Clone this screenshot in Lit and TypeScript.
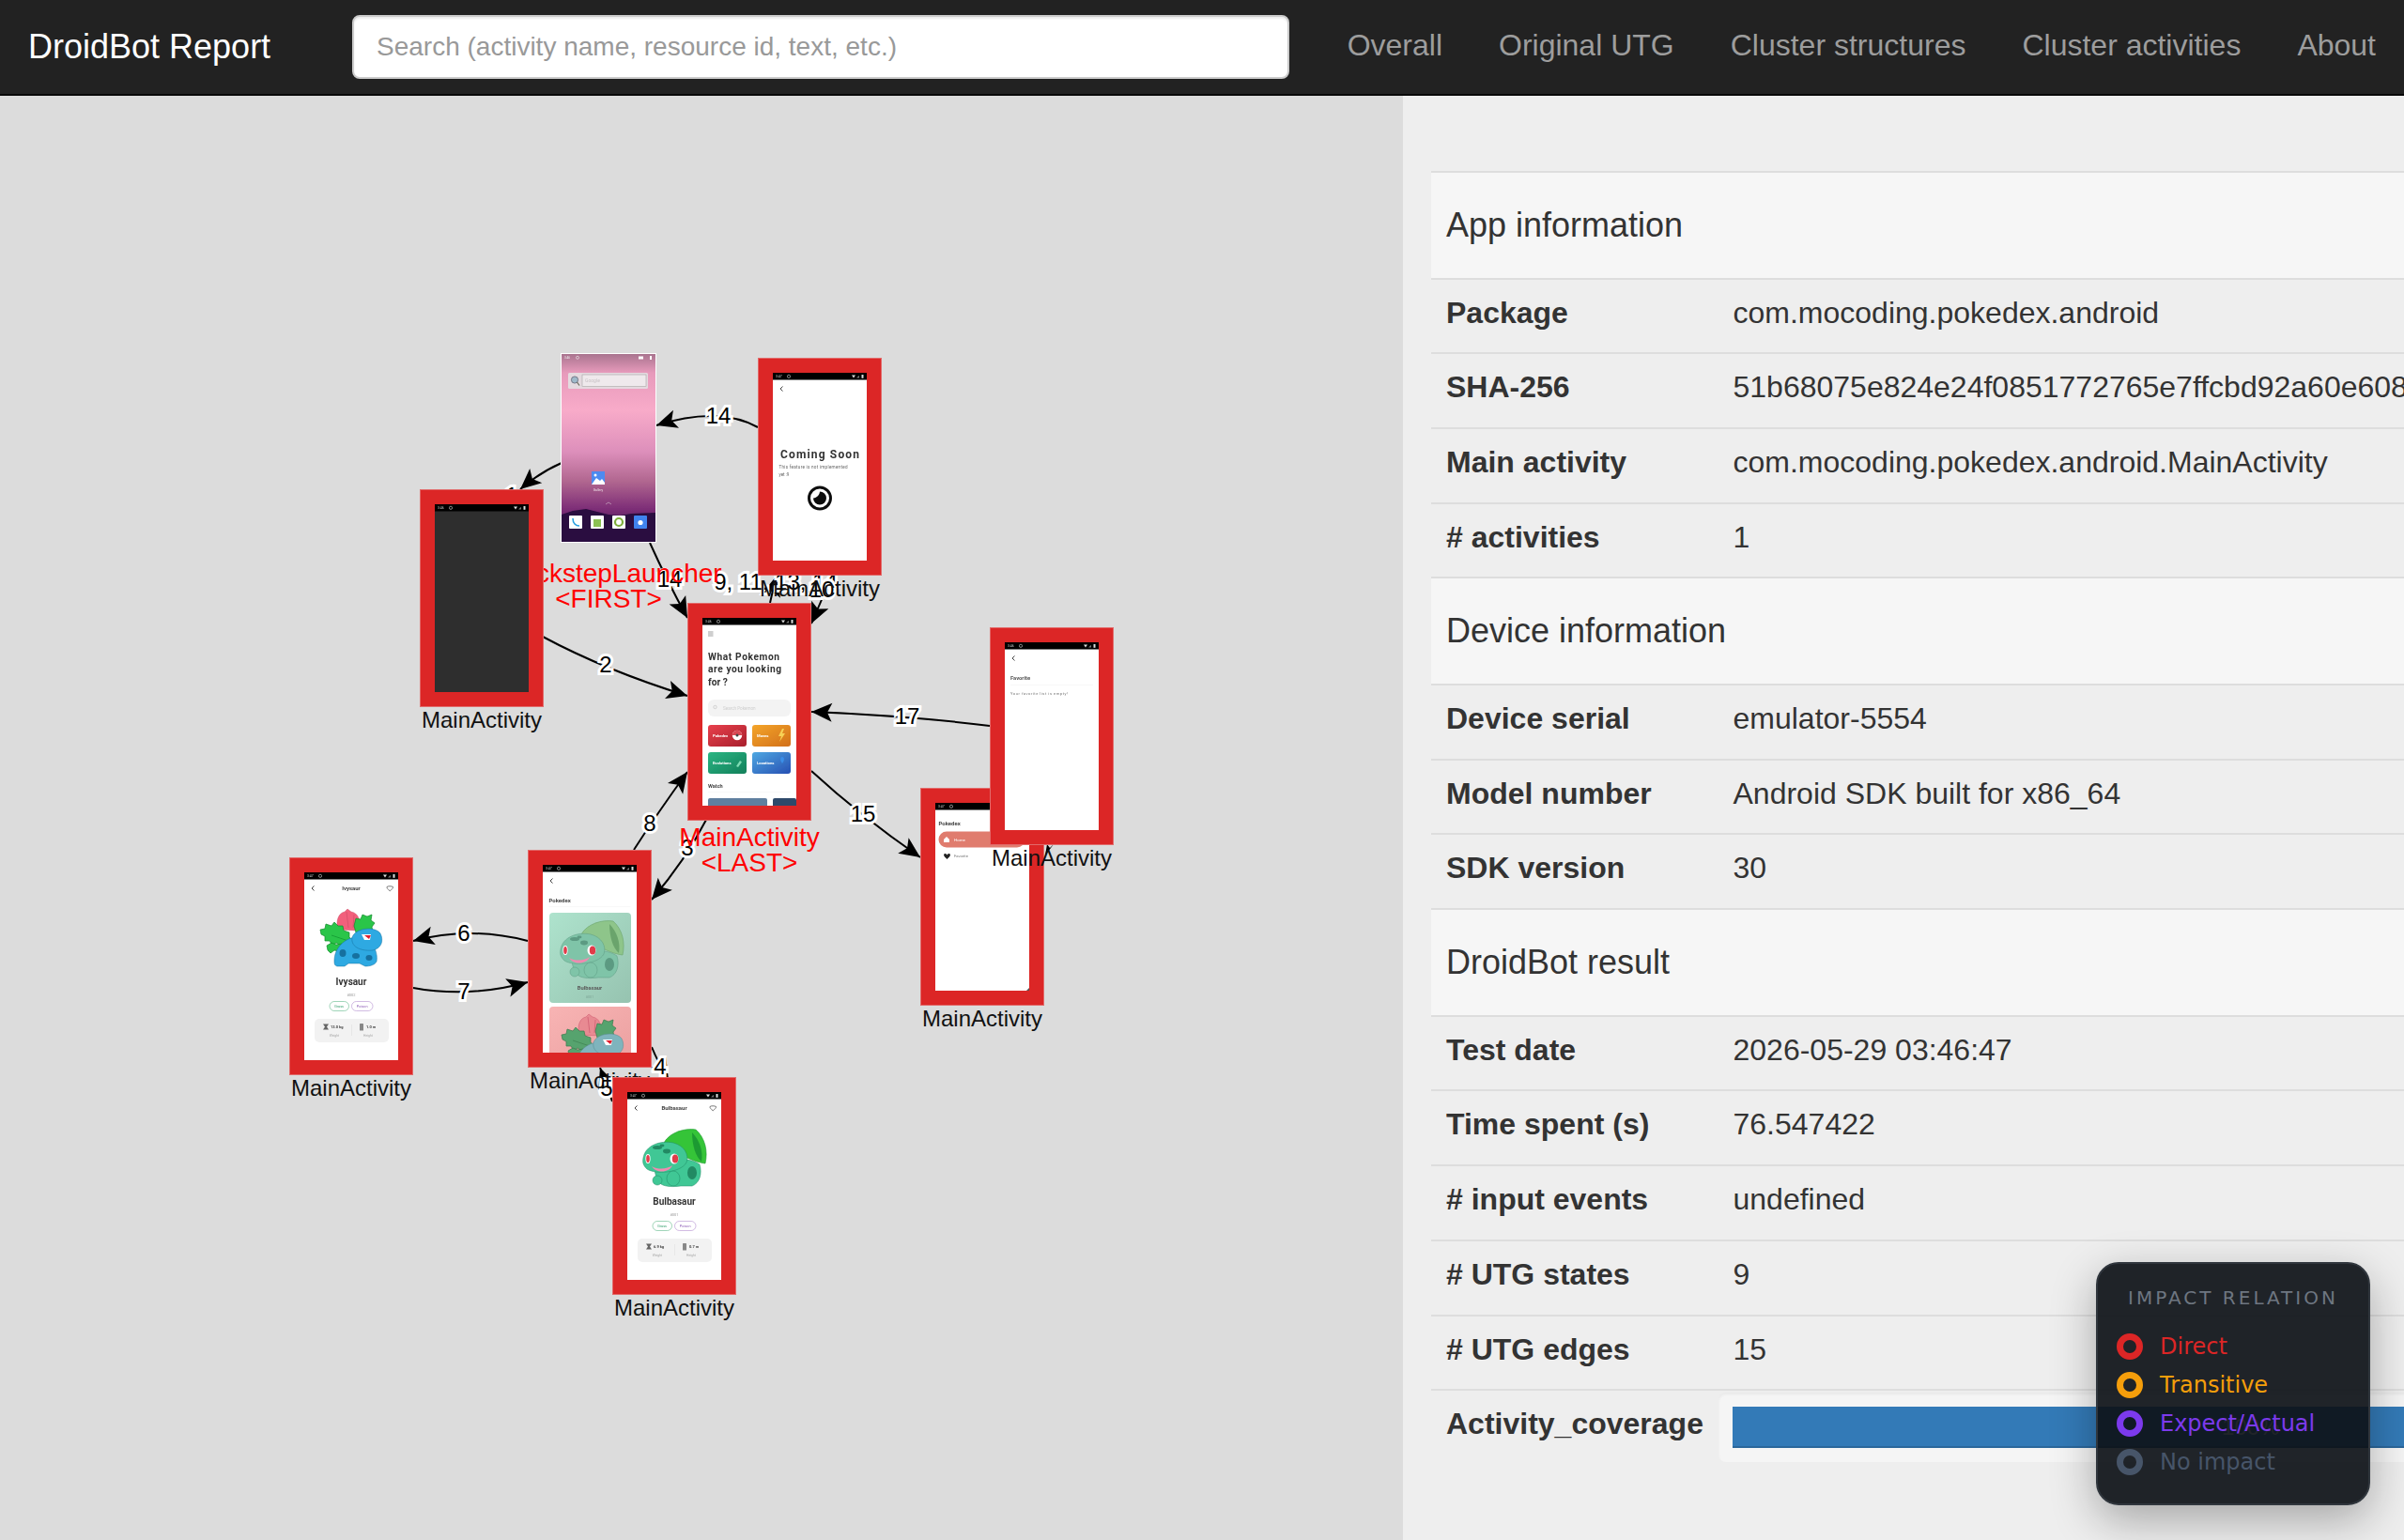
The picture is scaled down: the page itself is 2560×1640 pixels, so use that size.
import { LitElement, html, css, svg } from 'lit';
import { customElement } from 'lit/decorators.js';

const navLinks = ['Overall', 'Original UTG', 'Cluster structures', 'Cluster activities', 'About'];

const sections = [
    {
        title: 'App information',
        rows: [
            ['Package', 'com.mocoding.pokedex.android'],
            ['SHA-256', '51b68075e824e24f0851772765e7ffcbd92a60e6085c'],
            ['Main activity', 'com.mocoding.pokedex.android.MainActivity'],
            ['# activities', '1'],
        ],
    },
    {
        title: 'Device information',
        rows: [
            ['Device serial', 'emulator-5554'],
            ['Model number', 'Android SDK built for x86_64'],
            ['SDK version', '30'],
        ],
    },
    {
        title: 'DroidBot result',
        rows: [
            ['Test date', '2026-05-29 03:46:47'],
            ['Time spent (s)', '76.547422'],
            ['# input events', 'undefined'],
            ['# UTG states', '9'],
            ['# UTG edges', '15'],
        ],
    },
];

const legend = [
    { label: 'Direct', color: '#dc2626' },
    { label: 'Transitive', color: '#f59e0b' },
    { label: 'Expect/Actual', color: '#7c3aed' },
    { label: 'No impact', color: '#475569' },
];

// arrow head with the swept back tail that vis.js draws
function head(x: number, y: number, fx: number, fy: number) {
    const len = Math.hypot(x - fx, y - fy) || 1;
    const ux = (x - fx) / len;
    const uy = (y - fy) / len;
    const bx = x - ux * 22;
    const by = y - uy * 22;
    const nx = x - ux * 17;
    const ny = y - uy * 17;
    const pts = [
        [x, y],
        [bx - uy * 10, by + ux * 10],
        [nx, ny],
        [bx + uy * 10, by - ux * 10],
    ];
    return svg`<polygon points=${pts.map((p) => p.join(',')).join(' ')} fill="#000"></polygon>`;
}

function edge(x1: number, y1: number, cx: number, cy: number, x2: number, y2: number) {
    return svg`
        <path d="M${x1},${y1} Q${cx},${cy} ${x2},${y2}" fill="none" stroke="#000" stroke-width="2"></path>
        ${head(x2, y2, cx, cy)}
    `;
}

function edgeLabel(text: string, x: number, y: number) {
    return svg`<text class="edge-label" x=${x} y=${y + 8}>${text}</text>`;
}

function statusBar(time: string) {
    return svg`
        <rect width="100" height="7.5" fill="#000"></rect>
        <text class="t" x="3" y="5.2" font-size="3.4" fill="#ccc">${time}</text>
        <circle cx="17" cy="3.8" r="1.6" fill="none" stroke="#bbb" stroke-width="0.7"></circle>
        <path d="M84,2.5 L88,2.5 L86,5.5 Z" fill="#ddd"></path>
        <path d="M89,5.5 L92,5.5 L92,2.8 Z" fill="#777"></path>
        <rect x="94.5" y="2" width="2" height="3.8" fill="#ddd"></rect>
    `;
}

function chevron() {
    return svg`<path d="M10.5,14.5 L8,17 L10.5,19.5" fill="none" stroke="#444" stroke-width="1"></path>`;
}

function heartOutline() {
    return svg`<path d="M88,15.5 C89,14.5 93,14.5 94.5,15.5 C95,16.5 93,18.5 91.2,19.8 C89.5,18.5 87.5,16.5 88,15.5 Z"
        fill="none" stroke="#444" stroke-width="0.7"></path>`;
}

function bulbasaur(x: number, y: number, muted: boolean) {
    const body = muted ? '#7fc4a8' : '#3fc795';
    const dark = muted ? '#5c9a82' : '#238a64';
    const leaf = muted ? '#8ec58a' : '#35c438';
    const leafDark = muted ? '#6ba46c' : '#1f9a30';
    return svg`
        <g transform="translate(${x},${y})">
            <path d="M22,15 C28,4 44,-1 56,1 C66,10 69,24 66,37 C56,36 36,28 22,15 Z" fill=${leaf} stroke=${leafDark} stroke-width="0.6"></path>
            <path d="M52,4 C60,12 64,24 62,35 C56,30 52,18 52,4 Z" fill=${leafDark}></path>
            <path d="M13,40 C22,30 50,30 60,38 C63,48 60,58 52,61 L40,61 C32,62 24,62 19,59 C14,54 11,46 13,40 Z" fill=${body} stroke=${dark} stroke-width="0.5"></path>
            <path d="M0,31 C2,18 18,12 32,15 C44,18 49,28 46,36 C40,47 13,49 4,43 C0,39 -1,36 0,31 Z" fill=${body} stroke=${dark} stroke-width="0.5"></path>
            <ellipse cx="52" cy="47" rx="5" ry="7" fill=${dark}></ellipse>
            <ellipse cx="15" cy="20" rx="5" ry="2" fill=${dark}></ellipse>
            <ellipse cx="25" cy="24" rx="4" ry="2.4" fill=${dark}></ellipse>
            <ellipse cx="20" cy="18" rx="2.5" ry="1.4" fill=${dark}></ellipse>
            <ellipse cx="32" cy="53" rx="7" ry="8" fill=${body} stroke=${dark} stroke-width="0.5"></ellipse>
            <ellipse cx="15" cy="55" rx="5" ry="5" fill=${body} stroke=${dark} stroke-width="0.5"></ellipse>
            <ellipse cx="5" cy="32" rx="2.6" ry="5" fill="#fff"></ellipse>
            <ellipse cx="5" cy="32" rx="1.8" ry="4" fill="#e23a4a"></ellipse>
            <ellipse cx="33" cy="32" rx="4.5" ry="5.5" fill="#fff"></ellipse>
            <ellipse cx="34" cy="32" rx="3.2" ry="4.6" fill="#e23a4a"></ellipse>
            <path d="M9,40 C16,44 26,43 31,39 C28,47 14,48 9,40 Z" fill="#f08ab0"></path>
        </g>
    `;
}

function ivysaur(x: number, y: number, muted: boolean) {
    const body = muted ? '#7fb4bd' : '#2fa9e2';
    const dark = muted ? '#58898f' : '#14709f';
    const leaf = muted ? '#56a36e' : '#2cc548';
    const leafDark = muted ? '#3a7a4e' : '#0e8a2a';
    const bud = muted ? '#e88a92' : '#f2617c';
    return svg`
        <g transform="translate(${x},${y})">
            <path d="M19,22 C16,12 20,4 26,3 L29,0 L33,3 C40,4 44,12 41,23 Z" fill=${bud} stroke="#c24560" stroke-width="0.4"></path>
            <path d="M28,3 L30,20 M36,6 L35,20" stroke="#c24560" stroke-width="0.5"></path>
            <path d="M36,18 L38,10 L43,11 L45,6 L50,8 L55,6 L54,12 L58,15 L55,19 L56,24 L49,23 L44,27 L38,25 Z" fill=${leaf} stroke=${leafDark} stroke-width="0.7"></path>
            <path d="M0,22 L5,21 L6,16 L12,18 L15,14 L19,18 L24,18 L25,23 L31,25 L31,30 L35,34 L31,38 L26,36 L22,39 L17,36 L13,39 L10,34 L5,34 L5,29 L1,27 Z" fill=${leaf} stroke=${leafDark} stroke-width="0.7"></path>
            <path d="M12,28 L30,34" stroke=${leafDark} stroke-width="0.6"></path>
            <path d="M7,39 L12,36 L17,38 L23,37 L25,42 L20,45 L15,44 L11,47 L8,44 Z" fill=${leaf} stroke=${leafDark} stroke-width="0.7"></path>
            <path d="M15,55 C15,42 26,30 40,30 C54,30 62,44 60,56 C58,60 52,61 48,61 L42,58 L30,58 L26,61 L18,61 C15,60 15,58 15,55 Z" fill=${body} stroke=${dark} stroke-width="0.5"></path>
            <path d="M34,30 C38,20 58,18 64,26 C68,34 65,42 56,44 C46,45 32,42 34,30 Z" fill=${body} stroke=${dark} stroke-width="0.5"></path>
            <ellipse cx="24" cy="47" rx="3.5" ry="4" fill=${dark}></ellipse>
            <ellipse cx="38" cy="50" rx="4" ry="3" fill=${dark}></ellipse>
            <ellipse cx="52" cy="52" rx="3.5" ry="3" fill=${dark}></ellipse>
            <path d="M44,27 L54,27 L53,33 L47,33 Z" fill="#fff"></path>
            <path d="M47,28 L54,28 L52,32 Z" fill="#e01f2e"></path>
        </g>
    `;
}

function detail(name: string, num: string, kg: string, m: string, art: unknown) {
    return svg`
        <rect width="100" height="200" fill="#fff"></rect>
        ${statusBar('3:47')}
        ${chevron()}
        <text class="t b mid" x="50" y="19" font-size="6" fill="#444">${name}</text>
        ${heartOutline()}
        ${art}
        <text class="t b mid" x="50" y="120" font-size="10" fill="#333">${name}</text>
        <text class="t mid" x="50" y="131.5" font-size="4" fill="#999">${num}</text>
        <rect x="27" y="137.5" width="20.5" height="10" rx="5" fill="#fff" stroke="#5fb98a" stroke-width="0.6"></rect>
        <text class="t mid" x="37.2" y="144" font-size="3.8" fill="#3fa574">Grass</text>
        <rect x="50.5" y="137.5" width="22.5" height="10" rx="5" fill="#fff" stroke="#b48ed0" stroke-width="0.6"></rect>
        <text class="t mid" x="61.7" y="144" font-size="3.8" fill="#9060b8">Poison</text>
        <rect x="11" y="156" width="79" height="25" rx="5" fill="#f2f2f2"></rect>
        <path d="M20,161.5 h6 l-2,3 l2,3 h-6 l2,-3 Z" fill="#666"></path>
        <text class="t b" x="28" y="166" font-size="4" fill="#444">${kg}</text>
        <text class="t mid" x="32" y="174.5" font-size="3.4" fill="#aaa">Weight</text>
        <rect x="50" y="162" width="0.5" height="12" fill="#ddd"></rect>
        <rect x="59" y="161" width="4" height="7.5" rx="0.6" fill="#888"></rect>
        <text class="t b" x="66" y="166" font-size="4" fill="#444">${m}</text>
        <text class="t mid" x="68" y="174.5" font-size="3.4" fill="#aaa">Height</text>
    `;
}

const launcherShot = svg`
    <rect width="100" height="200" fill="url(#wall)"></rect>
    <text class="t" x="3" y="5.2" font-size="3.2" fill="#eee">3:46</text>
    <circle cx="17" cy="3.8" r="1.5" fill="none" stroke="#eee" stroke-width="0.6"></circle>
    <rect x="82" y="2.5" width="5" height="3" fill="#fff"></rect>
    <rect x="94" y="2" width="2" height="4" fill="#fff"></rect>
    <rect x="7" y="20" width="85" height="17" rx="1.5" fill="#e4dadf"></rect>
    <rect x="22" y="22" width="68" height="12.5" fill="#efe9ec" stroke="#999" stroke-width="0.5"></rect>
    <circle cx="14" cy="27.5" r="3.6" fill="#9fb9c9" stroke="#667" stroke-width="0.8"></circle>
    <path d="M16.5,30 L19,33.5" stroke="#665" stroke-width="1.2"></path>
    <text class="t" x="25" y="30" font-size="5" fill="#c9c2c6">Google</text>
    <rect x="32" y="125" width="14" height="14" fill="#4d8af0"></rect>
    <path d="M32,139 L37,132 L41,135 L43,133 L46,137 L46,139 Z" fill="#fff"></path>
    <circle cx="36" cy="129" r="1.5" fill="#fff"></circle>
    <text class="t mid" x="39" y="146" font-size="3.4" fill="#eedfe8">Gallery</text>
    <path d="M47,160 L50,158 L53,160" fill="none" stroke="#c9a9c2" stroke-width="0.7"></path>
    <path d="M0,171 L12,167 L26,165 L38,168 L50,171 L62,172 L74,170 L100,169 L100,200 L0,200 Z" fill="#2a0c3f"></path>
    <rect x="8" y="172" width="14" height="14" rx="1" fill="#fff"></rect>
    <path d="M12,175 C12,180 15,183 19,183" fill="none" stroke="#2a9fe0" stroke-width="1.6"></path>
    <rect x="31" y="172" width="14" height="14" rx="1" fill="#fff"></rect>
    <rect x="34" y="176" width="8" height="8" fill="#8cc152"></rect>
    <rect x="54" y="172" width="14" height="14" rx="1" fill="#fff"></rect>
    <circle cx="61" cy="179" r="4" fill="none" stroke="#7fae3c" stroke-width="2.2"></circle>
    <rect x="77" y="172" width="14" height="14" rx="1" fill="#3f83ee"></rect>
    <circle cx="84" cy="179.5" r="2.6" fill="#fff"></circle>
`;

const darkShot = svg`
    <rect width="100" height="200" fill="#2e2e2e"></rect>
    ${statusBar('3:46')}
`;

const soonShot = svg`
    <rect width="100" height="200" fill="#fff"></rect>
    ${statusBar('3:47')}
    ${chevron()}
    <text class="t b mid" x="50" y="91" font-size="12" fill="#333" textLength="84">Coming Soon</text>
    <text class="t" x="6.5" y="102" font-size="4.6" fill="#666" textLength="73">This feature is not implemented</text>
    <text class="t" x="6.5" y="109.5" font-size="4.6" fill="#666">yet :9</text>
    <circle cx="50" cy="133.5" r="11.5" fill="#fff" stroke="#111" stroke-width="3"></circle>
    <path d="M50,126.5 A7,7 0 1 1 43,133.5 C47,133 49.5,130.5 50,126.5 Z" fill="#111"></path>
`;

const homeShot = svg`
    <rect width="100" height="200" fill="#fff"></rect>
    ${statusBar('3:46')}
    <path d="M6,15 h5.5 M6,17 h5.5 M6,19 h5.5" stroke="#777" stroke-width="0.7"></path>
    <text class="t b" x="6" y="44.5" font-size="10.2" fill="#333" textLength="76">What Pokemon</text>
    <text class="t b" x="6" y="58" font-size="10.2" fill="#333" textLength="78">are you looking</text>
    <text class="t b" x="6" y="72" font-size="10.2" fill="#333">for ?</text>
    <rect x="6" y="87" width="88" height="18" rx="6" fill="#f3f3f3"></rect>
    <circle cx="13.5" cy="95" r="1.7" fill="none" stroke="#bbb" stroke-width="0.6"></circle>
    <text class="t" x="22" y="97.5" font-size="4.6" fill="#cfcfcf">Search Pokemon</text>
    <rect x="6" y="114" width="41" height="23" rx="3" fill="url(#red)"></rect>
    <rect x="53" y="114" width="41" height="23" rx="3" fill="url(#orange)"></rect>
    <rect x="6" y="143" width="41" height="23" rx="3" fill="url(#green)"></rect>
    <rect x="53" y="143" width="41" height="23" rx="3" fill="url(#blue)"></rect>
    <text class="t b" x="11" y="127" font-size="4.2" fill="#fff">Pokedex</text>
    <text class="t b" x="58" y="127" font-size="4.2" fill="#fff">Moves</text>
    <text class="t b" x="11" y="156" font-size="4.2" fill="#fff">Evolutions</text>
    <text class="t b" x="58" y="156" font-size="4.2" fill="#fff">Locations</text>
    <circle cx="37" cy="125" r="5.2" fill="#fff"></circle>
    <path d="M31.8,125 A5.2,5.2 0 0 1 42.2,125 Z" fill="#d94a55"></path>
    <circle cx="37" cy="125" r="1.5" fill="#444"></circle>
    <path d="M85,118 L81,126 L84,126 L82,132 L88,123 L85,123 L87,118 Z" fill="#f7d154"></path>
    <path d="M36,158 L40,152 L42,153.5 L38,159 Z" fill="#7fdcb4"></path>
    <path d="M85,155 C82,151 83,148 85,148 C87,148 88,151 85,155 Z" fill="#3a8ee8"></path>
    <text class="t b" x="6" y="181" font-size="5.6" fill="#444">Watch</text>
    <rect x="6" y="185.5" width="88" height="0.4" fill="#eee"></rect>
    <rect x="6" y="192" width="63" height="10" rx="2" fill="#5f7f9f"></rect>
    <rect x="75" y="192" width="25" height="10" rx="2" fill="#2f4a6a"></rect>
`;

const favoriteShot = svg`
    <rect width="100" height="200" fill="#fff"></rect>
    ${statusBar('3:46')}
    ${chevron()}
    <text class="t b" x="6" y="40" font-size="5.8" fill="#555">Favorite</text>
    <rect x="6" y="45" width="88" height="0.4" fill="#eee"></rect>
    <text class="t" x="6" y="56" font-size="4.1" fill="#777" textLength="61">Your favorite list is empty!</text>
`;

const drawerShot = svg`
    <rect width="100" height="200" fill="#fff"></rect>
    ${statusBar('3:47')}
    <text class="t b" x="3.5" y="24" font-size="6" fill="#444">Pokedex</text>
    <rect x="3.5" y="30.5" width="92" height="17" rx="8.5" fill="#e07b6e"></rect>
    <path d="M9,39 L12,36 L15,39 L15,42 L9,42 Z" fill="#fff"></path>
    <text class="t" x="20" y="40.5" font-size="4.4" fill="#fff">Home</text>
    <path d="M9,55 C10,53 12,54 12.5,55.5 C13,54 15,53 16,55 C16,57 14,58.5 12.5,60 C11,58.5 9,57 9,55 Z" fill="#222"></path>
    <text class="t" x="20" y="58" font-size="4.2" fill="#777">Favorite</text>
    <path d="M100,197 L100,200 L97,200 Z" fill="#555"></path>
`;

const listShot = svg`
    <rect width="100" height="200" fill="#fff"></rect>
    ${statusBar('3:47')}
    ${chevron()}
    <text class="t b" x="6.5" y="40" font-size="6" fill="#444">Pokedex</text>
    <rect x="6.5" y="44.5" width="87" height="0.4" fill="#eee"></rect>
    <rect x="7" y="51" width="87" height="96" rx="4" fill="url(#mint)"></rect>
    ${bulbasaur(19, 59, true)}
    <text class="t b mid" x="50" y="133" font-size="5.8" fill="#5a5a5a">Bulbasaur</text>
    <text class="t mid" x="50" y="142" font-size="3.8" fill="#7fa898">#001</text>
    <rect x="7" y="151" width="87" height="60" rx="4" fill="url(#rose)"></rect>
    ${ivysaur(20, 159, true)}
`;

const nodes = [
    { x: 582, y: 361, bare: true, shot: launcherShot, label: 'QuickstepLauncher', extra: '<FIRST>' },
    { x: 447, y: 521, shot: darkShot, label: 'MainActivity' },
    { x: 807, y: 381, shot: soonShot, label: 'MainActivity' },
    { x: 980, y: 839, shot: drawerShot, label: 'MainActivity' },
    { x: 1054, y: 668, shot: favoriteShot, label: 'MainActivity' },
    { x: 732, y: 642, shot: homeShot, label: 'MainActivity', extra: '<LAST>' },
    { x: 308, y: 913, shot: detail('Ivysaur', '#002', '13.0 kg', '1.0 m', ivysaur(17, 39, false)), label: 'MainActivity' },
    { x: 562, y: 905, shot: listShot, label: 'MainActivity' },
    { x: 652, y: 1147, shot: detail('Bulbasaur', '#001', '6.9 kg', '0.7 m', bulbasaur(17, 39, false)), label: 'MainActivity' },
];

function node(n: any) {
    const cx = n.x + 66;
    const bottom = n.y + 232;
    if (n.bare) {
        return svg`
            <rect x=${n.x + 15} y=${n.y + 15} width="102" height="202" fill="#fff"></rect>
            <svg x=${n.x + 16} y=${n.y + 16} width="100" height="200" viewBox="0 0 100 200">
                <g filter="url(#soft)">${n.shot}</g>
            </svg>
            <text class="red-label" x=${cx} y=${n.y + 259}>${n.label}</text>
            <text class="red-label" x=${cx} y=${n.y + 286}>${n.extra}</text>
        `;
    }
    return svg`
        <rect x=${n.x + 0.5} y=${n.y + 0.5} width="131" height="231" fill="#dc2626" stroke="#e26a6a"></rect>
        <svg x=${n.x + 16} y=${n.y + 16} width="100" height="200" viewBox="0 0 100 200">
            <g filter="url(#soft)">${n.shot}</g>
        </svg>
        ${n.extra
            ? svg`
                <text class="red-label" x=${cx} y=${bottom + 27}>${n.label}</text>
                <text class="red-label" x=${cx} y=${bottom + 54}>${n.extra}</text>`
            : svg`<text class="node-label" x=${cx} y=${bottom + 22}>${n.label}</text>`}
    `;
}

@customElement('app-root')
export class AppRoot extends LitElement {
    static styles = css`
        :host {
            display: block;
            position: relative;
            width: 2560px;
            height: 1640px;
            overflow: hidden;
            font-family: 'Liberation Sans', Arial, sans-serif;
            color: #333;
            background: #eee;
        }
        .navbar {
            display: flex;
            align-items: center;
            height: 100px;
            background: #222;
            border-bottom: 2px solid #080808;
        }
        .brand {
            width: 375px;
            flex: none;
            padding-left: 30px;
            box-sizing: border-box;
            font-size: 36px;
            color: #fff;
        }
        .search {
            width: 998px;
            height: 68px;
            flex: none;
            box-sizing: border-box;
            padding: 0 24px;
            font: 28px 'Liberation Sans', Arial, sans-serif;
            background: #fff;
            border: 2px solid #ccc;
            border-radius: 8px;
            box-shadow: inset 0 2px 2px rgba(0, 0, 0, 0.075);
            outline: none;
        }
        .search::placeholder {
            color: #999;
        }
        .links {
            display: flex;
            margin-left: auto;
            padding-bottom: 4px;
        }
        .links a {
            padding: 0 30px;
            font-size: 32px;
            color: #9d9d9d;
            white-space: nowrap;
        }
        .main {
            display: flex;
            height: 1538px;
        }
        .canvas {
            width: 1494px;
            flex: none;
            background: #dcdcdc;
            overflow: hidden;
        }
        .canvas svg.graph {
            display: block;
        }
        .edge-label {
            font: 24px 'Liberation Sans', Arial, sans-serif;
            text-anchor: middle;
            fill: #000;
            stroke: #fff;
            stroke-width: 6px;
            paint-order: stroke;
        }
        .node-label {
            font: 24px 'Liberation Sans', Arial, sans-serif;
            text-anchor: middle;
            fill: #111;
        }
        .red-label {
            font: 28px 'Liberation Sans', Arial, sans-serif;
            text-anchor: middle;
            fill: #f00;
        }
        .t {
            font-family: Roboto, 'Liberation Sans', sans-serif;
        }
        .b {
            font-weight: 700;
        }
        .mid {
            text-anchor: middle;
        }
        .info {
            flex: 1;
            min-width: 0;
            padding: 80px 0 0 30px;
            overflow: hidden;
        }
        table {
            width: 1440px;
            table-layout: fixed;
            border-collapse: collapse;
            font-size: 32px;
            line-height: 45.7px;
        }
        col.key {
            width: 305.5px;
        }
        td,
        th {
            padding: 13px 16px 19px;
            border-top: 2px solid #ddd;
            text-align: left;
            font-weight: 400;
            white-space: nowrap;
        }
        th {
            padding: 16px;
            background: #f6f6f6;
        }
        td.key {
            font-weight: 700;
        }
        h4 {
            margin: 20px 0;
            font-size: 36px;
            font-weight: 400;
            line-height: 39.6px;
        }
        td.well-cell {
            padding: 0;
        }
        .well {
            padding: 15px;
            background: #f5f5f5;
            border-radius: 8px;
            box-shadow: inset 0 2px 3px rgba(0, 0, 0, 0.05);
        }
        .bar {
            height: 44px;
            line-height: 44px;
            font-size: 24px;
            text-align: center;
            color: #fff;
            background: #337ab7;
            box-shadow: inset 0 -2px 0 rgba(0, 0, 0, 0.15);
        }
        .legend {
            position: absolute;
            right: 36px;
            bottom: 37px;
            width: 292px;
            height: 259px;
            box-sizing: border-box;
            padding: 24px 20px 0;
            font-family: 'DejaVu Sans', sans-serif;
            background: rgba(13, 17, 23, 0.92);
            border: 2px solid #30363d;
            border-radius: 24px;
            box-shadow: 0 16px 48px rgba(0, 0, 0, 0.3);
        }
        .legend-title {
            margin-bottom: 19px;
            font-size: 20px;
            line-height: 24px;
            letter-spacing: 3px;
            text-align: center;
            white-space: nowrap;
            color: #6e7681;
        }
        .legend-row {
            display: flex;
            align-items: center;
            gap: 18px;
            height: 41px;
            font-size: 24px;
        }
        .ring {
            width: 28px;
            height: 28px;
            flex: none;
            box-sizing: border-box;
            border: 7px solid currentColor;
            border-radius: 50%;
        }
    `;

    render() {
        return html`
            <nav class="navbar">
                <div class="brand">DroidBot Report</div>
                <input class="search" placeholder="Search (activity name, resource id, text, etc.)" />
                <div class="links">${navLinks.map((l) => html`<a>${l}</a>`)}</div>
            </nav>
            <div class="main">
                <div class="canvas">${this.renderGraph()}</div>
                <div class="info">
                    <table>
                        <colgroup><col class="key" /><col /></colgroup>
                        ${sections.map((s) => html`
                            <tr><th colspan="2"><h4>${s.title}</h4></th></tr>
                            ${s.rows.map((r) => html`
                                <tr><td class="key">${r[0]}</td><td>${r[1]}</td></tr>
                            `)}
                        `)}
                        <tr>
                            <td class="key">Activity_coverage</td>
                            <td class="well-cell"><div class="well"><div class="bar">100%</div></div></td>
                        </tr>
                    </table>
                </div>
            </div>
            <div class="legend">
                <div class="legend-title">IMPACT RELATION</div>
                ${legend.map((l) => html`
                    <div class="legend-row" style="color: ${l.color}"><span class="ring"></span>${l.label}</div>
                `)}
            </div>
        `;
    }

    renderGraph() {
        return svg`
            <svg class="graph" width="1494" height="1538" viewBox="0 102 1494 1538">
                <defs>
                    <filter id="soft" x="0" y="0" width="100%" height="100%">
                        <feGaussianBlur stdDeviation="0.4"></feGaussianBlur>
                    </filter>
                    <linearGradient id="wall" x1="0" y1="0" x2="0" y2="1">
                        <stop offset="0" stop-color="#a9748f"></stop>
                        <stop offset="0.1" stop-color="#e79abb"></stop>
                        <stop offset="0.3" stop-color="#f8abc9"></stop>
                        <stop offset="0.52" stop-color="#dd8fbb"></stop>
                        <stop offset="0.68" stop-color="#b0668f"></stop>
                        <stop offset="0.82" stop-color="#7f2f78"></stop>
                        <stop offset="1" stop-color="#2b0c42"></stop>
                    </linearGradient>
                    <linearGradient id="red" x1="0" y1="0" x2="1" y2="1">
                        <stop offset="0" stop-color="#e8404c"></stop>
                        <stop offset="1" stop-color="#a81f2c"></stop>
                    </linearGradient>
                    <linearGradient id="orange" x1="0" y1="0" x2="1" y2="1">
                        <stop offset="0" stop-color="#f4a52a"></stop>
                        <stop offset="1" stop-color="#d2701a"></stop>
                    </linearGradient>
                    <linearGradient id="green" x1="0" y1="0" x2="1" y2="1">
                        <stop offset="0" stop-color="#2bb583"></stop>
                        <stop offset="1" stop-color="#12805a"></stop>
                    </linearGradient>
                    <linearGradient id="blue" x1="0" y1="0" x2="1" y2="1">
                        <stop offset="0" stop-color="#4fa8e2"></stop>
                        <stop offset="1" stop-color="#2650b3"></stop>
                    </linearGradient>
                    <linearGradient id="mint" x1="0" y1="0" x2="1" y2="1">
                        <stop offset="0" stop-color="#aee3cd"></stop>
                        <stop offset="1" stop-color="#96c3b0"></stop>
                    </linearGradient>
                    <linearGradient id="rose" x1="0" y1="0" x2="1" y2="1">
                        <stop offset="0" stop-color="#f8b4b4"></stop>
                        <stop offset="1" stop-color="#eba0a0"></stop>
                    </linearGradient>
                </defs>
                ${edge(807, 455, 765, 432, 699, 453)}
                ${edge(598, 493, 575, 503, 554, 521)}
                ${edge(692, 578, 710, 618, 732, 658)}
                ${edge(578, 678, 645, 714, 732, 741)}
                ${edge(1054, 773, 966, 762, 864, 758)}
                ${edge(864, 821, 915, 868, 980, 913)}
                ${edge(675, 905, 700, 866, 732, 822)}
                ${edge(752, 873, 730, 916, 694, 958)}
                ${edge(562, 1002, 500, 986, 440, 1002)}
                ${edge(440, 1052, 500, 1063, 562, 1046)}
                ${edge(694, 1115, 700, 1130, 712, 1150)}
                ${edge(652, 1173, 646, 1156, 639, 1137)}
                ${edge(820, 642, 823, 628, 827, 613)}
                ${edge(885, 612, 876, 638, 864, 664)}
                <polygon points="1113,911 1115,899 1118,903 1122,899" fill="#000"></polygon>
                ${edgeLabel('14', 765, 443)}
                ${edgeLabel('1', 545, 528)}
                ${edgeLabel('14', 713, 617)}
                ${edgeLabel('2', 645, 708)}
                ${edgeLabel('17', 966, 763)}
                ${edgeLabel('15', 919, 867)}
                ${edgeLabel('8', 692, 877)}
                ${edgeLabel('3', 732, 903)}
                ${edgeLabel('6', 494, 994)}
                ${edgeLabel('7', 494, 1056)}
                ${edgeLabel('4', 703, 1136)}
                ${edgeLabel('5', 646, 1159)}
                ${edgeLabel('9, 11, 13, 14', 826, 620)}
                ${edgeLabel('10', 875, 628)}
                ${nodes.map((n) => node(n))}
            </svg>
        `;
    }
}
